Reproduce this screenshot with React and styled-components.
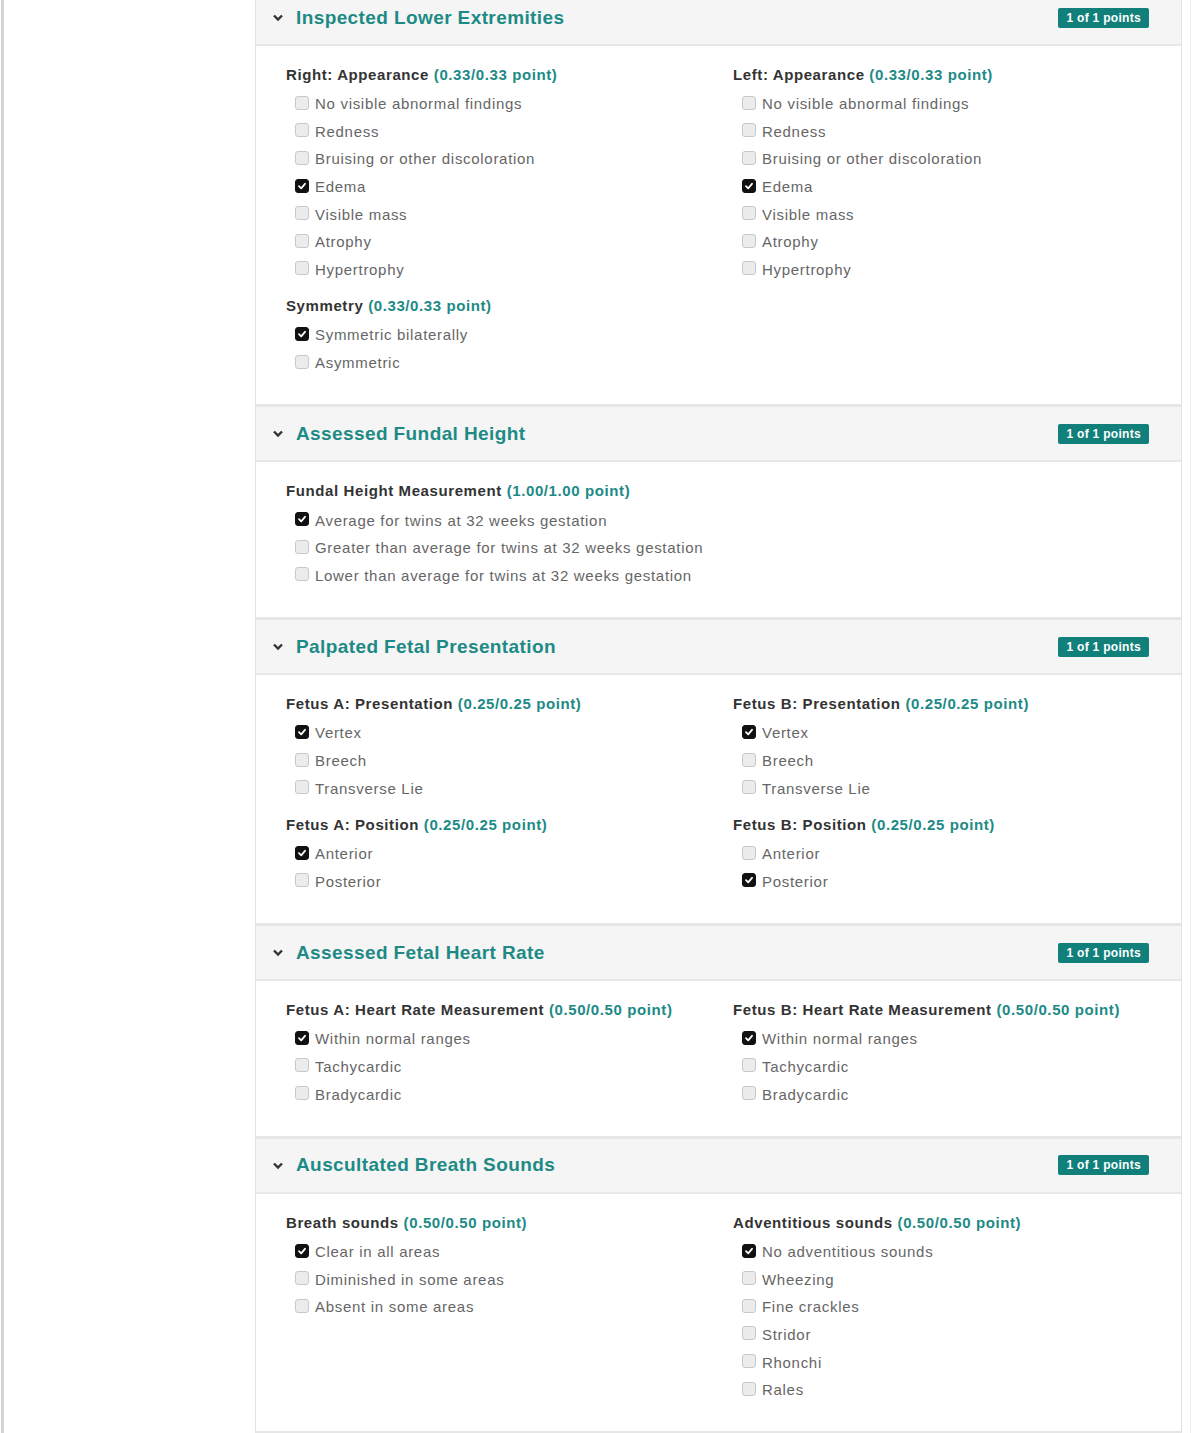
import React from 'react'
import styled, { createGlobalStyle } from 'styled-components'

const GlobalStyle = createGlobalStyle`
  html, body { margin: 0; padding: 0; background: #fff; }
  body {
    font-family: "Liberation Sans", Arial, Helvetica, sans-serif;
    color: #555;
    -webkit-font-smoothing: antialiased;
  }
`

const teal = '#1d8a86'

const Page = styled.div`
  display: flex;
  height: 1433px;
  overflow: hidden;
`

const Sidebar = styled.div`
  width: 254px;
  flex-shrink: 0;
  border-left: 3px solid #d4d4d4;
  margin-left: 1px;
  box-sizing: border-box;
`

const Main = styled.div`
  width: 927px;
  margin-top: -9px;
  flex-shrink: 0;
`

const Gutter = styled.div`
  flex: 1;
  border-left: 1px solid #eee;
  margin-left: 8px;
`

const Panel = styled.section`
  border: 1px solid #e2e2e2;
  border-top: 0;
  border-bottom: 3px solid #e6e6e6;
  background: #fff;
`

const Header = styled.div`
  height: 55px;
  background: #f5f5f5;
  border-bottom: 2px solid #e8e8e8;
  display: flex;
  align-items: center;
  padding: 0 32px 0 16px;
  box-sizing: border-box;
`

const Chevron = styled.svg`
  width: 12px;
  height: 12px;
  margin-right: 12px;
  margin-top: 1px;
`

const Title = styled.h3`
  margin: 0;
  flex: 1;
  font-size: 19px;
  font-weight: bold;
  color: ${teal};
  letter-spacing: 0.4px;
`

const Badge = styled.span`
  background: #11807b;
  color: #fff;
  font-size: 12px;
  font-weight: bold;
  padding: 0 8px;
  height: 20px;
  line-height: 20px;
  border-radius: 2px;
  letter-spacing: 0.3px;
`

const Body = styled.div`
  display: grid;
  grid-template-columns: 447px 1fr;
  padding: 18px 30px 28px;
`

const Column = styled.div`
  display: flex;
  flex-direction: column;
  gap: 12px;
`

const Group = styled.div``

const Label = styled.div`
  font-size: 15px;
  font-weight: bold;
  color: #333;
  line-height: 22px;
  margin-bottom: 4px;
  letter-spacing: 0.6px;
`

const Points = styled.span`
  color: ${teal};
`

const Option = styled.div`
  display: flex;
  align-items: center;
  height: 27.6px;
  padding-left: 9px;
  font-size: 15px;
  color: #666;
  letter-spacing: 0.7px;
`

const Box = styled.span`
  width: 14px;
  height: 14px;
  margin-right: 6px;
  border-radius: 3px;
  box-sizing: border-box;
  display: inline-flex;
  align-items: center;
  justify-content: center;
  border: 1px solid ${p => (p.$checked ? '#111' : '#c8c8c8')};
  background: ${p => (p.$checked ? '#111' : '#ececec')};
  margin-top: -2px;
`

function Check({ checked }) {
  return (
    <Box $checked={checked}>
      {checked && (
        <svg width="10" height="10" viewBox="0 0 10 10">
          <path d="M2 5.2 L4.2 7.3 L8 2.8" fill="none" stroke="#fff" strokeWidth="1.8" strokeLinecap="round" strokeLinejoin="round" />
        </svg>
      )}
    </Box>
  )
}

const sections = [
  {
    title: 'Inspected Lower Extremities',
    columns: [
      [
        {
          label: 'Right: Appearance',
          points: '0.33/0.33',
          options: ['No visible abnormal findings', 'Redness', 'Bruising or other discoloration', 'Edema', 'Visible mass', 'Atrophy', 'Hypertrophy'],
          checked: ['Edema'],
        },
        {
          label: 'Symmetry',
          points: '0.33/0.33',
          options: ['Symmetric bilaterally', 'Asymmetric'],
          checked: ['Symmetric bilaterally'],
        },
      ],
      [
        {
          label: 'Left: Appearance',
          points: '0.33/0.33',
          options: ['No visible abnormal findings', 'Redness', 'Bruising or other discoloration', 'Edema', 'Visible mass', 'Atrophy', 'Hypertrophy'],
          checked: ['Edema'],
        },
      ],
    ],
  },
  {
    title: 'Assessed Fundal Height',
    columns: [
      [
        {
          label: 'Fundal Height Measurement',
          points: '1.00/1.00',
          options: ['Average for twins at 32 weeks gestation', 'Greater than average for twins at 32 weeks gestation', 'Lower than average for twins at 32 weeks gestation'],
          checked: ['Average for twins at 32 weeks gestation'],
        },
      ],
      [],
    ],
  },
  {
    title: 'Palpated Fetal Presentation',
    columns: [
      [
        { label: 'Fetus A: Presentation', points: '0.25/0.25', options: ['Vertex', 'Breech', 'Transverse Lie'], checked: ['Vertex'] },
        { label: 'Fetus A: Position', points: '0.25/0.25', options: ['Anterior', 'Posterior'], checked: ['Anterior'] },
      ],
      [
        { label: 'Fetus B: Presentation', points: '0.25/0.25', options: ['Vertex', 'Breech', 'Transverse Lie'], checked: ['Vertex'] },
        { label: 'Fetus B: Position', points: '0.25/0.25', options: ['Anterior', 'Posterior'], checked: ['Posterior'] },
      ],
    ],
  },
  {
    title: 'Assessed Fetal Heart Rate',
    columns: [
      [{ label: 'Fetus A: Heart Rate Measurement', points: '0.50/0.50', options: ['Within normal ranges', 'Tachycardic', 'Bradycardic'], checked: ['Within normal ranges'] }],
      [{ label: 'Fetus B: Heart Rate Measurement', points: '0.50/0.50', options: ['Within normal ranges', 'Tachycardic', 'Bradycardic'], checked: ['Within normal ranges'] }],
    ],
  },
  {
    title: 'Auscultated Breath Sounds',
    columns: [
      [{ label: 'Breath sounds', points: '0.50/0.50', options: ['Clear in all areas', 'Diminished in some areas', 'Absent in some areas'], checked: ['Clear in all areas'] }],
      [
        {
          label: 'Adventitious sounds',
          points: '0.50/0.50',
          options: ['No adventitious sounds', 'Wheezing', 'Fine crackles', 'Stridor', 'Rhonchi', 'Rales'],
          checked: ['No adventitious sounds'],
        },
      ],
    ],
  },
]

function Section({ section }) {
  return (
    <Panel>
      <Header>
        <Chevron viewBox="0 0 12 12">
          <path d="M2 3.5 L6 7.5 L10 3.5" fill="none" stroke="#333" strokeWidth="2.4" strokeLinejoin="miter" />
        </Chevron>
        <Title>{section.title}</Title>
        <Badge>1 of 1 points</Badge>
      </Header>
      <Body>
        {section.columns.map((col, i) => (
          <Column key={i}>
            {col.map(group => (
              <Group key={group.label}>
                <Label>
                  {group.label} <Points>({group.points} point)</Points>
                </Label>
                {group.options.map(opt => (
                  <Option key={opt}>
                    <Check checked={group.checked.includes(opt)} />
                    {opt}
                  </Option>
                ))}
              </Group>
            ))}
          </Column>
        ))}
      </Body>
    </Panel>
  )
}

export default function App() {
  return (
    <>
      <GlobalStyle />
      <Page>
        <Sidebar />
        <Main>
          {sections.map(s => (
            <Section key={s.title} section={s} />
          ))}
        </Main>
        <Gutter />
      </Page>
    </>
  )
}
